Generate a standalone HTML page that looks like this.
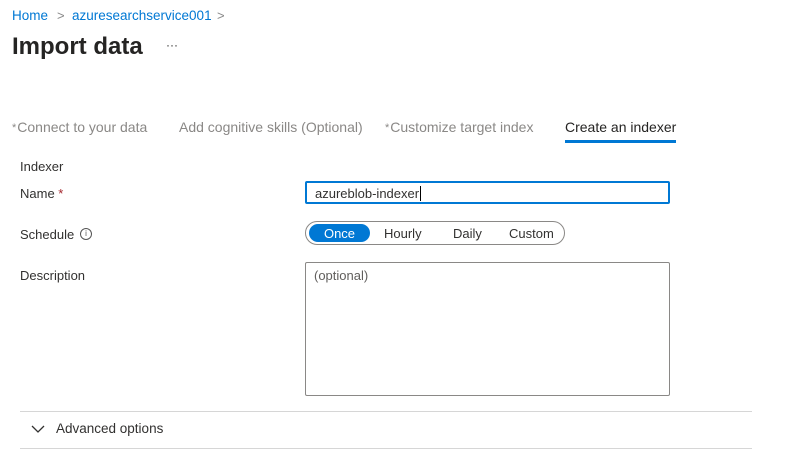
<!DOCTYPE html>
<html><head><meta charset="utf-8"><style>
*{margin:0;padding:0;box-sizing:border-box}
body{width:791px;height:471px;background:#fff;font-family:"Liberation Sans",sans-serif;color:#323130;position:relative;overflow:hidden;font-size:13px}
.a{position:absolute;white-space:nowrap}
.bc{color:#0078d4;font-size:13.5px}
.sep{color:#888;font-size:13px}
.tab{color:#8a8886;font-size:14px;top:119px}
.tab .s{font-size:11px;vertical-align:1px;margin-right:1px}
.lbl{font-size:13px;color:#323130}
</style></head><body>
<div class="a bc" style="left:12px;top:8px">Home</div>
<div class="a sep" style="left:57px;top:8px">&gt;</div>
<div class="a bc" style="left:72px;top:8px">azuresearchservice001</div>
<div class="a sep" style="left:217px;top:8px">&gt;</div>
<div class="a" style="left:12px;top:33px;font-size:24px;font-weight:bold;color:#252423">Import data</div>
<div class="a" style="left:166px;top:38px;font-size:12px;color:#323130">···</div>

<div class="a tab" style="left:12px"><span class="s">*</span>Connect to your data</div>
<div class="a tab" style="left:179px">Add cognitive skills (Optional)</div>
<div class="a tab" style="left:385px"><span class="s">*</span>Customize target index</div>
<div class="a" style="left:565px;top:119px;font-size:14px;color:#252423">Create an indexer</div>
<div class="a" style="left:565px;top:140px;width:111px;height:3px;background:#0078d4"></div>

<div class="a lbl" style="left:20px;top:159px">Indexer</div>
<div class="a lbl" style="left:20px;top:186px">Name <span style="color:#a4262c">*</span></div>
<div class="a" style="left:305px;top:181px;width:365px;height:23px;border:2px solid #0078d4;border-radius:2px;padding:3px 0 0 8px;font-size:13px">azureblob-indexer<span style="border-left:1px solid #000;margin-left:1px"></span></div>

<div class="a lbl" style="left:20px;top:227px">Schedule</div>
<div class="a" style="left:80px;top:228px;width:12px;height:12px;border:1px solid #555;border-radius:50%;font-size:8px;text-align:center;line-height:10px;color:#555">i</div>
<div class="a" style="left:305px;top:221px;width:260px;height:24px;border:1px solid #8a8886;border-radius:12px"></div>
<div class="a" style="left:309px;top:224px;width:61px;height:18px;background:#0078d4;border-radius:9px;color:#fff;font-size:13px;text-align:center;line-height:20px">Once</div>
<div class="a" style="left:384px;top:226px;font-size:13px">Hourly</div>
<div class="a" style="left:453px;top:226px;font-size:13px">Daily</div>
<div class="a" style="left:509px;top:226px;font-size:13px">Custom</div>

<div class="a lbl" style="left:20px;top:268px">Description</div>
<div class="a" style="left:305px;top:262px;width:365px;height:134px;border:1px solid #8a8886;border-radius:2px;padding:5px 0 0 8px;font-size:13px;color:#605e5c">(optional)</div>

<div class="a" style="left:20px;top:411px;width:732px;height:1px;background:#d6d6d6"></div>
<svg class="a" style="left:31px;top:424px" width="14" height="10" viewBox="0 0 14 10"><path d="M1 2 L7 8 L13 2" fill="none" stroke="#323130" stroke-width="1.3"/></svg>
<div class="a" style="left:56px;top:421px;font-size:13.5px;color:#323130">Advanced options</div>
<div class="a" style="left:20px;top:448px;width:732px;height:1px;background:#d6d6d6"></div>
</body></html>
